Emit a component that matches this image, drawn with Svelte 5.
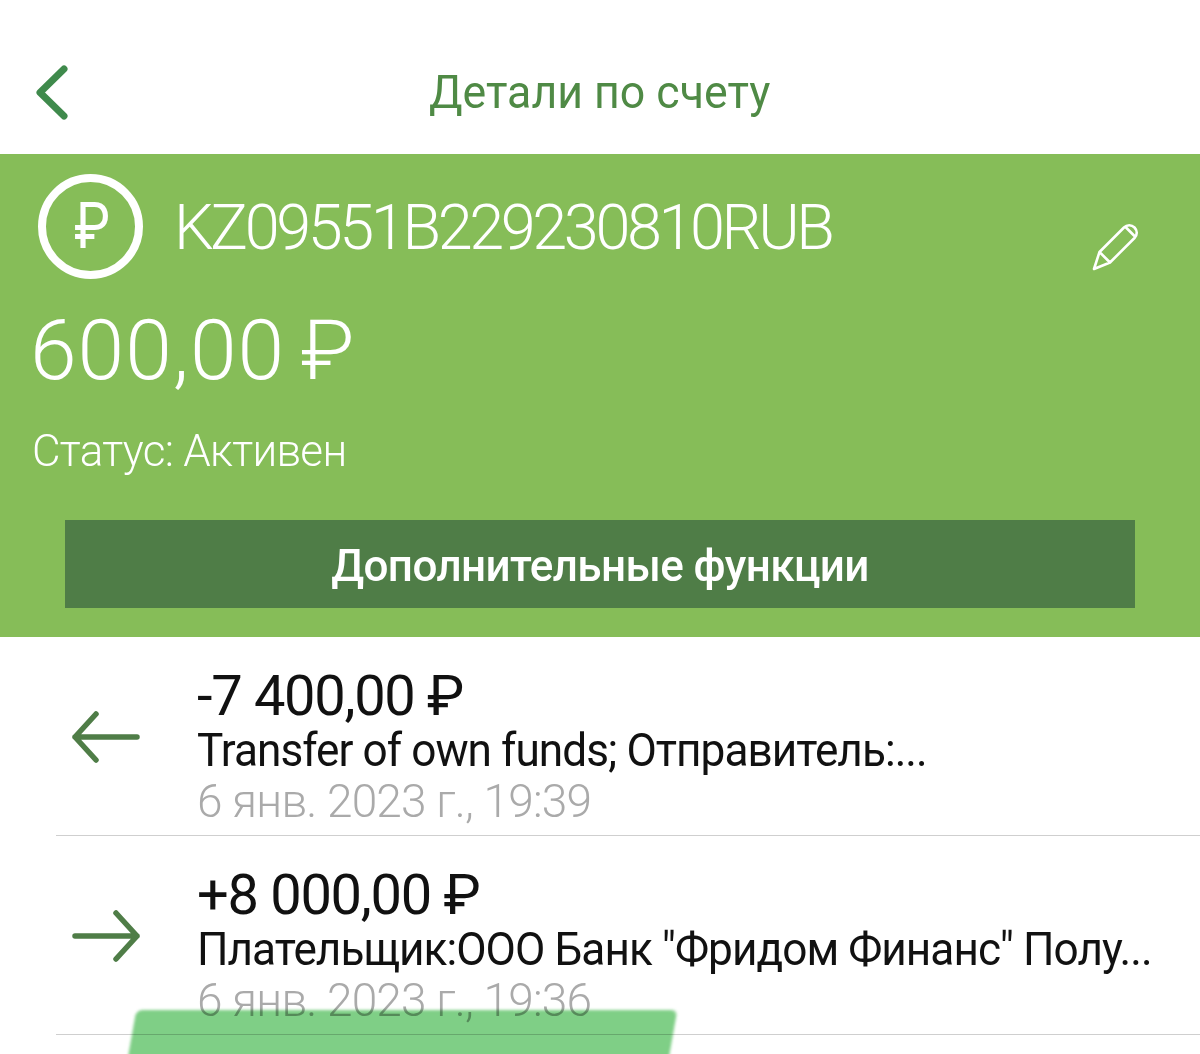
<script>
  const operations = [
    { dir: 'out', amount: '-7 400,00 ₽', text: 'Transfer of own funds; Отправитель:...', date: '6 янв. 2023 г., 19:39' },
    { dir: 'in', amount: '+8 000,00 ₽', text: 'Плательщик:ООО Банк "Фридом Финанс" Полу...', date: '6 янв. 2023 г., 19:36' }
  ];
</script>

<div class="page">
  <header class="topbar">
    <button class="back" aria-label="Назад">
      <svg width="34" height="56" viewBox="0 0 34 56">
        <path d="M29 4 L5 27.5 L29 51" fill="none" stroke="#3f8a4c" stroke-width="7" stroke-linecap="round" stroke-linejoin="round" />
      </svg>
    </button>
    <h1>Детали по счету</h1>
  </header>

  <section class="account">
    <div class="account-row">
      <div class="coin"><span>₽</span></div>
      <div class="number">KZ09551B229230810RUB</div>
      <svg class="pencil" width="48" height="48" viewBox="0 0 48 48">
        <path d="M3 46 L8.5 29 L33 4.5 C36 1.5 40.5 1.5 43.5 4.5 C46.5 7.5 46.5 12 43.5 15 L19 39.5 Z M8.5 29 L19 39.5 M34 3.5 L44.5 14" fill="none" stroke="#fff" stroke-width="2.6" stroke-linejoin="round" />
      </svg>
    </div>
    <div class="balance">600,00 ₽</div>
    <div class="status">Статус: Активен</div>
    <button class="more">Дополнительные функции</button>
  </section>

  <ul class="operations">
    {#each operations as op}
      <li class="operation">
        <div class="arrow">
          <svg width="68" height="52" viewBox="0 0 68 52" class:flip={op.dir === 'in'}>
            <path d="M65 26 H3 M24 3 L3 26 L24 49" fill="none" stroke="#4f7d47" stroke-width="5.5" stroke-linecap="round" stroke-linejoin="round" />
          </svg>
        </div>
        <div class="info">
          <div class="amount">{op.amount}</div>
          <div class="text">{op.text}</div>
          <div class="date">{op.date}</div>
        </div>
      </li>
    {/each}
  </ul>

  <div class="marker"></div>
</div>

<style>
  :global(body) {
    margin: 0;
    background: #fff;
  }

  .page {
    position: relative;
    width: 1200px;
    height: 1054px;
    overflow: hidden;
    font-family: Roboto, "Liberation Sans", sans-serif;
  }

  .topbar {
    height: 154px;
    display: flex;
    align-items: center;
    justify-content: center;
    padding-top: 29px;
    box-sizing: border-box;
    position: relative;
  }

  .back {
    position: absolute;
    left: 35px;
    top: 65px;
    padding: 0;
    border: 0;
    background: none;
    line-height: 0;
  }

  h1 {
    margin: 0;
    font-size: 47px;
    font-weight: 400;
    color: #4f8a45;
    transform: scaleX(0.95);
  }

  .account {
    height: 483px;
    box-sizing: border-box;
    background: #86bd58;
    color: #fff;
    padding: 20px 32px 0;
  }

  .account-row {
    display: flex;
    align-items: center;
    padding-left: 6px;
  }

  .coin {
    width: 105px;
    height: 105px;
    box-sizing: border-box;
    border: 8px solid #fff;
    border-radius: 50%;
    display: flex;
    align-items: center;
    justify-content: center;
    flex: none;
  }

  .coin span {
    font-size: 64px;
    font-weight: 400;
    padding-left: 3px;
    transform: scaleX(0.84);
  }

  .number {
    margin-left: 31px;
    padding-top: 2px;
    font-size: 63px;
    font-weight: 300;
    letter-spacing: -3.4px;
    flex: 1;
  }

  .pencil {
    margin-right: 29px;
    margin-top: 41px;
  }

  .balance {
    margin: 23px 0 0 -2px;
    font-size: 84px;
    font-weight: 300;
    line-height: 98px;
    letter-spacing: 1px;
    word-spacing: -6px;
  }

  .status {
    margin-top: 25px;
    font-size: 44px;
    font-weight: 300;
    line-height: 52px;
    letter-spacing: -0.7px;
  }

  .more {
    display: block;
    width: 1070px;
    height: 88px;
    margin: 43px 0 0 33px;
    padding: 3px 0 0;
    border: 0;
    background: #4f7d47;
    color: #fff;
    font-family: inherit;
    font-size: 44px;
    font-weight: 500;
    letter-spacing: -0.6px;
  }

  .operations {
    list-style: none;
    margin: 0;
    padding: 0 0 0 56px;
  }

  .operation {
    height: 199px;
    box-sizing: border-box;
    border-bottom: 1px solid #cfcfcf;
    display: flex;
    align-items: flex-start;
  }

  .arrow {
    width: 141px;
    padding: 74px 0 0 16px;
    box-sizing: border-box;
    line-height: 0;
    flex: none;
  }

  .flip {
    transform: scaleX(-1);
  }

  .info {
    padding-top: 30px;
    white-space: nowrap;
  }

  .amount {
    font-size: 56px;
    line-height: 58px;
    color: #111;
    font-weight: 400;
    letter-spacing: -1.3px;
  }

  .text {
    font-size: 46px;
    line-height: 50px;
    color: #111;
    letter-spacing: -1px;
    transform: scaleX(0.96);
    transform-origin: left center;
  }

  .date {
    font-size: 46px;
    line-height: 52px;
    color: #aaa;
    font-weight: 300;
    letter-spacing: -0.8px;
  }

  .marker {
    position: absolute;
    left: 131px;
    top: 1010px;
    width: 541px;
    height: 60px;
    background: #7fcf86;
    border-radius: 6px;
    transform: skewX(-10deg);
    filter: blur(1.5px);
    mix-blend-mode: multiply;
  }
</style>
